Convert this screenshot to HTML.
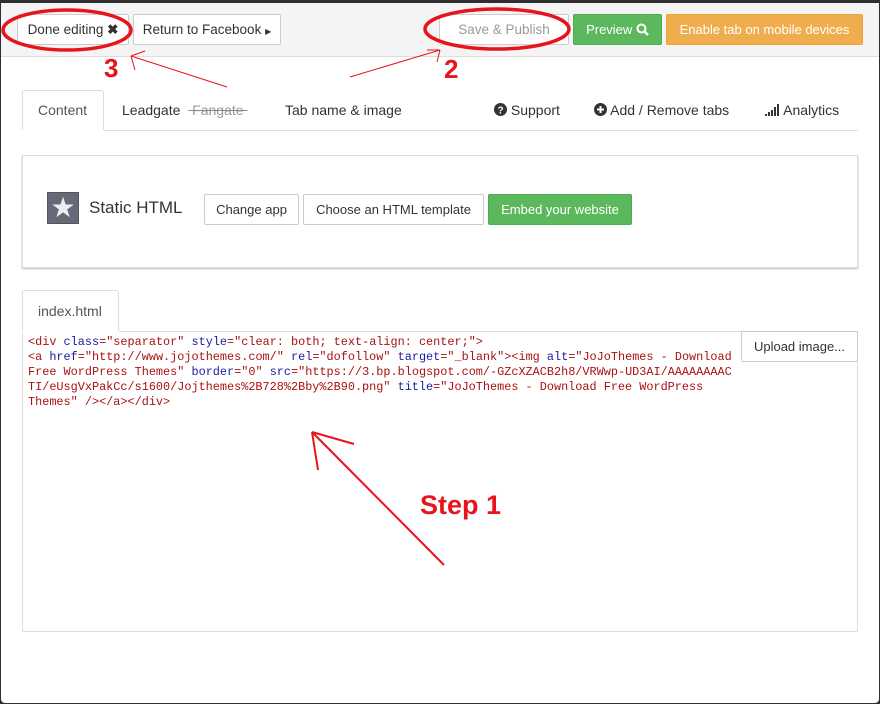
<!DOCTYPE html>
<html><head><meta charset="utf-8"><style>
*{box-sizing:border-box;margin:0;padding:0}
html,body{width:880px;height:704px;overflow:hidden;background:#2f2f2f;font-family:"Liberation Sans",sans-serif;font-size:14px;color:#333}
#page{position:absolute;left:1px;top:3px;width:878px;height:700px;background:#fff;border-radius:0 0 4px 4px}
#bar{position:absolute;left:0;top:0;width:878px;height:54px;background:#f4f4f4;border-bottom:1px solid #ddd}
.btn{position:absolute;height:31px;line-height:29px;border:1px solid #ccc;background:#fff;border-radius:2px;text-align:center;font-size:13px;color:#333;white-space:nowrap}
.g{background:#5cb85c;border-color:#4cae4c;color:#fff}
.o{background:#f0ad4e;border-color:#eea236;color:#fff}
.abs{position:absolute;white-space:nowrap}
pre{position:absolute;left:27px;top:332px;font-family:"Liberation Mono",monospace;font-size:11.85px;line-height:15px;color:#a11}
.k{color:#1a1aa6}
</style></head><body>
<div id="page">
<div id="bar"></div>
<div class="btn" style="left:16px;top:11px;width:112px;font-size:13.5px">Done editing <b>✖</b></div>
<div class="btn" style="left:132px;top:11px;width:148px;font-size:13.5px">Return to Facebook <span style="font-size:8px">▶</span></div>
<div class="btn" style="left:438px;top:11px;width:130px;color:#999;font-size:13.5px">Save &amp; Publish</div>
<div class="btn g" style="left:572px;top:11px;width:89px">Preview <svg width="13" height="13" viewBox="0 0 13 13" style="vertical-align:-2px"><circle cx="5.5" cy="5.5" r="4" stroke="#fff" stroke-width="2" fill="none"/><path d="M8.5 8.5L12 12" stroke="#fff" stroke-width="2.5"/></svg></div>
<div class="btn o" style="left:665px;top:11px;width:197px">Enable tab on mobile devices</div>

<div class="abs" style="left:21px;top:87px;width:82px;height:41px;border:1px solid #ddd;border-bottom:none;background:#fff;border-radius:3px 3px 0 0"></div>
<div class="abs" style="left:21px;top:127px;width:836px;height:1px;background:#ddd"></div>
<div class="abs" style="left:21px;top:127px;width:82px;height:2px;background:#fff"></div>
<div class="abs" style="left:37px;top:99px;color:#555">Content</div>
<div class="abs" style="left:121px;top:99px">Leadgate <span style="color:#999;margin-left:4px;text-decoration:line-through;text-decoration-color:#888">&nbsp;Fangate&nbsp;</span></div>
<div class="abs" style="left:284px;top:99px">Tab name &amp; image</div>
<div class="abs" style="left:493px;top:99px"><svg width="13" height="13" viewBox="0 0 13 13" style="vertical-align:-1px"><circle cx="6.5" cy="6.5" r="6.5" fill="#333"/><text x="6.5" y="10.5" fill="#fff" font-size="10" font-weight="bold" text-anchor="middle" font-family="Liberation Sans">?</text></svg> Support</div>
<div class="abs" style="left:593px;top:99px"><svg width="13" height="13" viewBox="0 0 13 13" style="vertical-align:-1px"><circle cx="6.5" cy="6.5" r="6.5" fill="#333"/><path d="M6.5 3v7M3 6.5h7" stroke="#fff" stroke-width="2"/></svg> Add / Remove tabs</div>
<div class="abs" style="left:764px;top:99px"><svg width="15" height="12" viewBox="0 0 15 12" style="vertical-align:-1px"><rect x="0" y="10" width="2" height="2" fill="#333"/><rect x="3" y="8" width="2" height="4" fill="#333"/><rect x="6" y="6" width="2" height="6" fill="#333"/><rect x="9" y="3" width="2" height="9" fill="#333"/><rect x="12" y="0" width="2" height="12" fill="#333"/></svg> Analytics</div>

<div class="abs" style="left:21px;top:152px;width:836px;height:113px;border:1px solid #ddd;box-shadow:0 1px 2px #bbb"></div>
<div class="abs" style="left:46px;top:189px;width:32px;height:32px;background:#666a78;border:1px solid #555;color:#eee;font-size:28px;line-height:30px;text-align:center">★</div>
<div class="abs" style="left:88px;top:195px;font-size:17px">Static HTML</div>
<div class="btn" style="left:203px;top:191px;width:95px">Change app</div>
<div class="btn" style="left:302px;top:191px;width:181px">Choose an HTML template</div>
<div class="btn g" style="left:487px;top:191px;width:144px">Embed your website</div>

<div class="abs" style="left:21px;top:287px;width:97px;height:42px;border:1px solid #ddd;border-bottom:none;border-radius:3px 3px 0 0;background:#fff"></div>
<div class="abs" style="left:37px;top:300px;color:#555">index.html</div>
<div class="abs" style="left:21px;top:328px;width:836px;height:301px;border:1px solid #ddd"></div>
<div class="abs" style="left:21px;top:328px;width:97px;height:2px;background:#fff"></div>
<div class="btn" style="left:740px;top:328px;width:117px">Upload image...</div>
<pre>&lt;div <span class="k">class</span>=<span>"separator"</span> <span class="k">style</span>="clear: both; text-align: center;"&gt;
&lt;a <span class="k">href</span>="http://www.jojothemes.com/" <span class="k">rel</span>="dofollow" <span class="k">target</span>="_blank"&gt;&lt;img <span class="k">alt</span>="JoJoThemes - Download
Free WordPress Themes" <span class="k">border</span>="0" <span class="k">src</span>="https://3.bp.blogspot.com/-GZcXZACB2h8/VRWwp-UD3AI/AAAAAAAAC
TI/eUsgVxPakCc/s1600/Jojthemes%2B728%2Bby%2B90.png" <span class="k">title</span>="JoJoThemes - Download Free WordPress
Themes" /&gt;&lt;/a&gt;&lt;/div&gt;</pre>
</div>
<svg width="880" height="704" style="position:absolute;left:0;top:0" fill="none" stroke="#e8141b">
<ellipse cx="67" cy="30" rx="64" ry="20" stroke-width="3.5"/>
<ellipse cx="497" cy="29" rx="72" ry="20" stroke-width="3.5"/>
<path d="M227 87 L131 56 M131 56 L145 51 M131 56 L135 70" stroke-width="1"/>
<path d="M350 77 L440 50 M440 50 L437 62 M440 50 L427 50" stroke-width="1"/>
<path d="M444 565 L312 432 M312 432 L354 444 M312 432 L318 470" stroke-width="2"/>
<text x="104" y="77" fill="#e8141b" stroke="none" font-family="Liberation Sans" font-weight="bold" font-size="26">3</text>
<text x="444" y="78" fill="#e8141b" stroke="none" font-family="Liberation Sans" font-weight="bold" font-size="26">2</text>
<text x="420" y="514" fill="#e8141b" stroke="none" font-family="Liberation Sans" font-weight="bold" font-size="27">Step 1</text>
</svg>
</body></html>
